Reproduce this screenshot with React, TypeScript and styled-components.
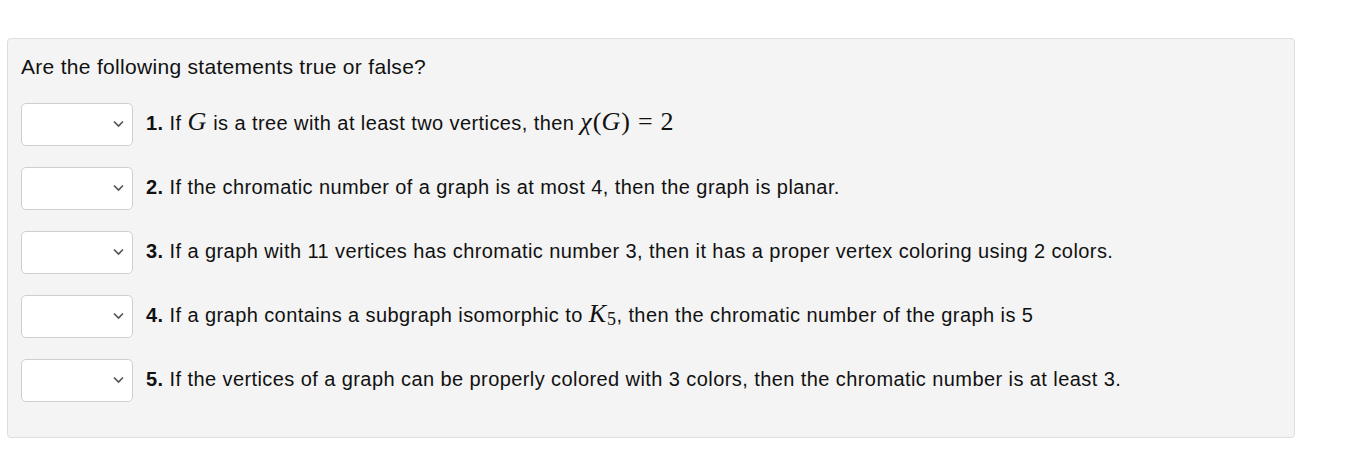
import React from 'react';
import styled, { createGlobalStyle } from 'styled-components';

const GlobalStyle = createGlobalStyle`
  body {
    margin: 0;
    background: #fff;
    font-family: Arial, "Liberation Sans", sans-serif;
    color: #111;
  }
`;

const Panel = styled.div`
  margin: 38px 0 0 7px;
  width: 1288px;
  box-sizing: border-box;
  background: #f4f4f4;
  border: 1px solid #dedede;
  border-radius: 4px;
  padding: 17px 14px 35px 13px;
`;

const Title = styled.div`
  font-size: 21px;
  letter-spacing: 0.3px;
  line-height: 22px;
  margin-bottom: 25px;
`;

const Rows = styled.div`
  display: flex;
  flex-direction: column;
  gap: 21px;
`;

const Row = styled.div`
  display: flex;
  align-items: center;
  gap: 13px;
  font-size: 20px;
  letter-spacing: 0.42px;
  line-height: 24px;
`;

const Statement = styled.span`
  margin-top: -4px;
`;

const SelectWrap = styled.div`
  position: relative;
  width: 112px;
  height: 43px;
  flex: none;
`;

const Select = styled.select`
  appearance: none;
  width: 100%;
  height: 100%;
  box-sizing: border-box;
  background: #fff;
  border: 1px solid #cfcfcf;
  border-radius: 5px;
  font: inherit;
`;

const Chevron = styled.svg`
  position: absolute;
  right: 9px;
  top: 17px;
  pointer-events: none;
`;

const Num = styled.b`
  font-weight: bold;
`;

const M = styled.span<{ $size?: number }>`
  font-family: "Liberation Serif", "Times New Roman", serif;
  font-size: ${(p) => p.$size ?? 26}px;
  letter-spacing: 0;
  line-height: 20px;
`;

const MI = styled(M)`
  font-style: italic;
  margin-right: 1px;
`;

const Rel = styled(M)`
  margin: 0 8px;
`;

const Sub = styled.sub`
  font-family: "Liberation Serif", serif;
  font-size: 18px;
  line-height: 10px;
  vertical-align: -3px;
`;

const Dropdown = () => (
  <SelectWrap>
    <Select defaultValue="">
      <option value=""></option>
      <option value="T">True</option>
      <option value="F">False</option>
    </Select>
    <Chevron width="11" height="8" viewBox="0 0 11 8">
      <path d="M1 1.5 L5.5 6 L10 1.5" fill="none" stroke="#555" strokeWidth="1.7" />
    </Chevron>
  </SelectWrap>
);

const statements: React.ReactNode[] = [
  <>
    If <MI>G</MI> is a tree with at least two vertices, then <MI>χ</MI>
    <M>(</M>
    <MI>G</MI>
    <M>)</M>
    <Rel>=</Rel>
    <M>2</M>
  </>,
  <>If the chromatic number of a graph is at most 4, then the graph is planar.</>,
  <>If a graph with 11 vertices has chromatic number 3, then it has a proper vertex coloring using 2 colors.</>,
  <>
    If a graph contains a subgraph isomorphic to <MI>K</MI>
    <Sub>5</Sub>, then the chromatic number of the graph is 5
  </>,
  <>If the vertices of a graph can be properly colored with 3 colors, then the chromatic number is at least 3.</>,
];

export default function App() {
  return (
    <>
      <GlobalStyle />
      <Panel>
        <Title>Are the following statements true or false?</Title>
        <Rows>
          {statements.map((s, i) => (
            <Row key={i}>
              <Dropdown />
              <Statement>
                <Num>{i + 1}.</Num> {s}
              </Statement>
            </Row>
          ))}
        </Rows>
      </Panel>
    </>
  );
}
